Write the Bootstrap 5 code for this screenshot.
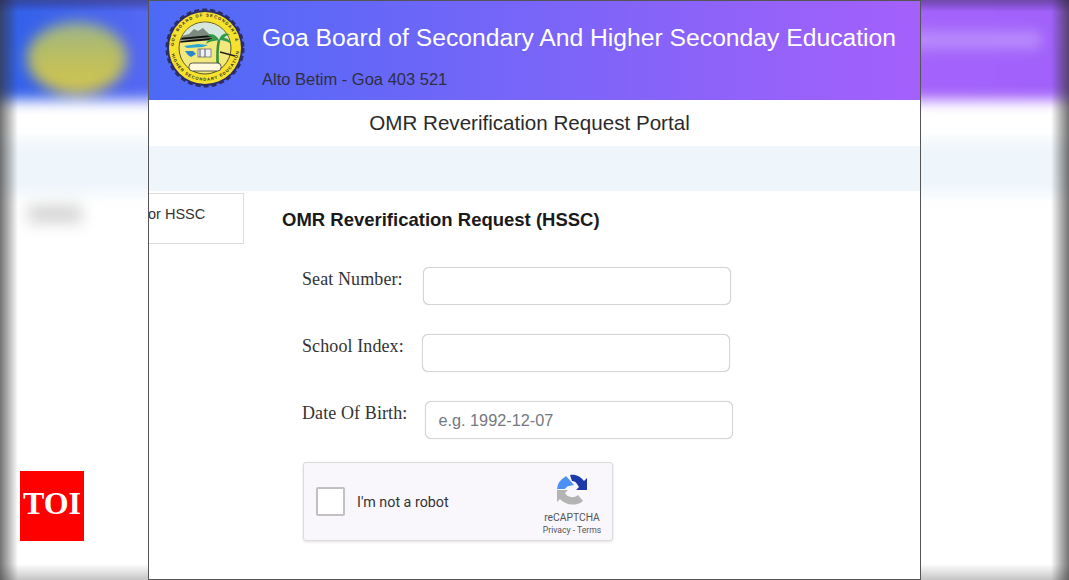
<!DOCTYPE html>
<html lang="en">
<head>
    <meta charset="UTF-8">
    <meta name="viewport" content="width=device-width, initial-scale=1.0">
    <title>OMR Reverification Request Portal</title>
    <link rel="stylesheet" href="https://cdn.jsdelivr.net/npm/bootstrap@5.3.0/dist/css/bootstrap.min.css">
    <style>
        html, body { height: 580px; overflow: hidden; background: #fff; }
        body { font-family: "Liberation Sans", Arial, sans-serif; color: #212529; }
        .stage { width: 1069px; height: 580px; }

        /* blurred copy of the page either side of the panel */
        .side { width: 148px; overflow: hidden; position: relative; }
        .side-right { flex: 1 1 0; }
        .side-blur { height: 640px; margin: -10px -20px 0; filter: blur(7px); }
        .side-head { height: 110px; }
        .side-left .side-head { background: linear-gradient(90deg, #2a5fe6, #5a68f5); padding: 32px 0 0 47px; }
        .side-right .side-head { background: linear-gradient(90deg, #a463fb, #a060fa); padding: 42px 0 0 10px; }
        .side-blob { width: 100px; height: 72px; border-radius: 50%; background: linear-gradient(180deg, #9db58a 0%, #b8bd62 45%, #d6c64c 100%); }
        .side-streak { width: 130px; height: 16px; background: #bb90fc; }
        .side-band { height: 54px; margin-top: 40px; background: #eef5fb; }
        .side-note { width: 54px; height: 18px; margin: 11px 0 0 48px; background: #d4d4d4; filter: blur(3px); }
        .side-edge { position: absolute; top: 0; bottom: 0; width: 18px; }
        .side-left .side-edge { left: 0; background: linear-gradient(90deg, rgba(55,55,55,.7), rgba(60,60,60,0)); }
        .side-right .side-edge { right: 0; background: linear-gradient(270deg, rgba(55,55,55,.7), rgba(60,60,60,0)); }
        .side::before { content: ""; position: absolute; z-index: 1; left: 0; right: 0; top: 0; height: 12px; background: linear-gradient(180deg, rgba(40,30,70,.45), rgba(40,30,70,0)); }
        .side::after { content: ""; position: absolute; z-index: 1; left: 0; right: 0; bottom: 0; height: 16px; background: linear-gradient(0deg, rgba(60,60,60,.3), rgba(60,60,60,0)); }

        .panel { width: 773px; height: 580px; flex: none; background: #fff; border: 1px solid #555; overflow: hidden; }
        .portal-head { height: 99px; background: linear-gradient(90deg, #4c6af6 0%, #a560fb 100%); padding-left: 16px; }
        .seal { width: 82px; height: 82px; flex: none; margin: 6px 0 0 -1px; }
        .portal-name { margin: 0 0 0 16px; padding-top: 21px; font-size: 24.7px; font-weight: 400; line-height: 32px; color: #fff; white-space: nowrap; }
        .portal-addr { margin: 15px 0 0 16px; font-size: 16.5px; line-height: 20px; color: #2f2f45; }
        .portal-title { height: 46px; line-height: 46px; font-size: 20.6px; text-align: center; color: #2b2b2b; margin: 0; padding-right: 10px; font-weight: 400; }
        .band { height: 45px; background: #eef5fb; }

        .tab-box { width: 95px; height: 51px; flex: none; margin-top: 2px; border: 1px solid #ddd; border-left: 0; font-size: 14.5px; color: #333; padding: 10px 0 0 0; text-indent: -1px; white-space: nowrap; overflow: hidden; }
        .form-area { padding: 17px 0 0 38px; }
        .form-heading { font-size: 18.5px; font-weight: 700; line-height: 24px; margin: 0 0 35px; color: #1a1a1a; }
        .form-line { margin: 0 0 29px 20px; gap: 20px; height: 38px; }
        .form-line label { font-family: "Liberation Serif", Georgia, serif; font-size: 18px; letter-spacing: .1px; color: #333; line-height: 22px; margin-top: 1px; white-space: nowrap; }
        .form-line .form-control { width: 308px; height: 38px; flex: none; border: 1px solid #d6d6d6; border-radius: 6px; font-size: 16.3px; padding: 0 12px; font-family: "Liberation Sans", Arial, sans-serif; box-shadow: 0 0 1px #ccc; }
        .form-line .form-control::placeholder { color: #73797f; }
        .form-line.line-tight { gap: 18px; }

        .captcha { width: 310px; height: 79px; margin: -6px 0 0 21px; background: #f9f7fc; border: 1px solid #dcdcdc; border-radius: 3px; box-shadow: 0 1px 3px rgba(0,0,0,.12); font-family: Roboto, "Liberation Sans", sans-serif; padding: 0 10px 0 12px; }
        .captcha-box { width: 29px; height: 29px; background: #fff; border: 2px solid #c1c1c1; border-radius: 2px; flex: none; }
        .captcha-text { font-size: 14.3px; color: #333; margin-left: 12px; padding-top: 2px; }
        .captcha-brand { width: 60px; text-align: center; margin-top: 11px; line-height: 1; color: #555; }
        .captcha-brand svg { display: block; margin: 0 auto 6px; }
        .captcha-name { font-size: 10.3px; line-height: 12px; }
        .captcha-links { font-size: 8.6px; line-height: 14px; margin-top: -1px; }

        .toi-mark { position: absolute; left: 20px; top: 471px; width: 64px; height: 70px; background: #f00; color: #fff; font-family: "Liberation Serif", serif; font-weight: 700; font-size: 32px; line-height: 64px; text-align: center; }
    </style>
</head>
<body>
    <div class="stage d-flex">
        <div class="side side-left">
            <div class="side-blur">
                <div class="side-head"><div class="side-blob"></div></div>
                <div class="side-band"></div>
                <div class="side-note"></div>
            </div>
            <div class="side-edge"></div>
        </div>

        <div class="panel">
            <div class="portal-head d-flex">
                <svg class="seal" viewBox="0 0 82 82" role="img" aria-label="Board seal">
                    <defs>
                        <path id="ringTop" d="M9.5 41a31.500 31.500 0 0 1 63 0"/>
                        <path id="ringLow" d="M7 44a34.300 34.300 0 0 0 68 0"/>
                        <clipPath id="sceneClip"><circle cx="41" cy="41" r="25.500"/></clipPath>
                    </defs>
                    <circle cx="41" cy="41" r="38" fill="#2d2d66" stroke="#2d2d66" stroke-width="3" stroke-dasharray="5 3"/>
                    <circle cx="41" cy="41" r="36" fill="#f5e12e"/>
                    <text font-family="Liberation Sans, sans-serif" font-size="4.200" font-weight="700" fill="#2b2b2b" letter-spacing="1.100"><textPath href="#ringTop" startOffset="2">GOA BOARD OF SECONDARY &amp;</textPath></text>
                    <text font-family="Liberation Sans, sans-serif" font-size="4.200" font-weight="700" fill="#2b2b2b" letter-spacing="1"><textPath href="#ringLow" startOffset="3">HIGHER SECONDARY EDUCATION</textPath></text>
                    <circle cx="41" cy="41" r="26" fill="#f2e97e" stroke="#33331f" stroke-width=".8"/>
                    <g clip-path="url(#sceneClip)">
                        <rect x="14" y="14" width="54" height="20" fill="#d5e6dc"/>
                        <path d="M14 30l11-3 5-5 4 2 5-3 6 6 7 3v3H14z" fill="#7b8a7c"/>
                        <path d="M14 32l34-3M14 35l34-3" stroke="#111" stroke-width="1.800"/>
                        <path d="M20 39l14-2 10 1-5 2-16 1z" fill="#2aa6d8"/>
                        <path d="M21 44l8 0 3 3-5 3-3-2z" fill="#2a86c8"/>
                        <rect x="34" y="42" width="13" height="8" fill="#eef2f4" stroke="#445" stroke-width=".6"/>
                        <path d="M36 42v8M41 42v8" stroke="#556" stroke-width="1"/>
                    </g>
                    <path d="M54 60c-1-10-1-18 1-27" stroke="#3c8f35" stroke-width="2.600" fill="none"/>
                    <path d="M55 33c-3-6-9-7-12-4 3 0 6 1 7 3-3-1-7 1-8 5 4-3 8-3 13-4zM55 33c2-7 8-8 11-5-3 0-5 1-6 3 3 0 6 2 7 6-4-3-8-4-12-4z" fill="#2f9c45"/>
                    <path d="M56 45l15 4" stroke="#222" stroke-width="1.500"/>
                    <rect x="25" y="56" width="32" height="8" rx="3.500" fill="#fff8dc" stroke="#333" stroke-width=".8"/>
                </svg>
                <div>
                    <h1 class="portal-name">Goa Board of Secondary And Higher Seconday Education</h1>
                    <p class="portal-addr">Alto Betim - Goa 403 521</p>
                </div>
            </div>

            <h2 class="portal-title">OMR Reverification Request Portal</h2>
            <div class="band"></div>

            <div class="d-flex">
                <div class="tab-box">or HSSC</div>
                <div class="form-area flex-grow-1">
                    <h3 class="form-heading">OMR Reverification Request (HSSC)</h3>
                    <form>
                        <div class="form-line d-flex">
                            <label for="seatNumber">Seat Number:</label>
                            <input type="text" id="seatNumber" class="form-control">
                        </div>
                        <div class="form-line line-tight d-flex">
                            <label for="schoolIndex">School Index:</label>
                            <input type="text" id="schoolIndex" class="form-control">
                        </div>
                        <div class="form-line line-tight d-flex">
                            <label for="dob">Date Of Birth:</label>
                            <input type="text" id="dob" class="form-control" placeholder="e.g. 1992-12-07">
                        </div>
                        <div class="captcha d-flex align-items-center justify-content-between">
                            <div class="d-flex align-items-center">
                                <div class="captcha-box"></div>
                                <span class="captcha-text">I'm not a robot</span>
                            </div>
                            <div class="captcha-brand align-self-start">
                                <svg width="32" height="32" viewBox="0 0 32 32" aria-hidden="true">
                                    <path d="M14 1c6-1 11 2 14 6l3-3v12H20l3-3-2-3c-1-2-3-3-5-3z" fill="#1c3aa9"/>
                                    <path d="M1 15A15 15 0 0 1 9 3l1-1 8 9-5 1c-2 0-3 2-4 3z" fill="#4a90f5"/>
                                    <path d="M1 16h11l-3 3c2 4 8 6 13 2l5 6c-7 6-18 4-23-2l-3 3z" fill="#b4b4b4"/>
                                </svg>
                                <div class="captcha-name">reCAPTCHA</div>
                                <div class="captcha-links">Privacy - Terms</div>
                            </div>
                        </div>
                    </form>
                </div>
            </div>
        </div>

        <div class="side side-right">
            <div class="side-blur">
                <div class="side-head"><div class="side-streak"></div></div>
                <div class="side-band"></div>
            </div>
            <div class="side-edge"></div>
        </div>
    </div>

    <div class="toi-mark">TOI</div>

    <script src="https://cdn.jsdelivr.net/npm/bootstrap@5.3.0/dist/js/bootstrap.bundle.min.js"></script>
</body>
</html>
